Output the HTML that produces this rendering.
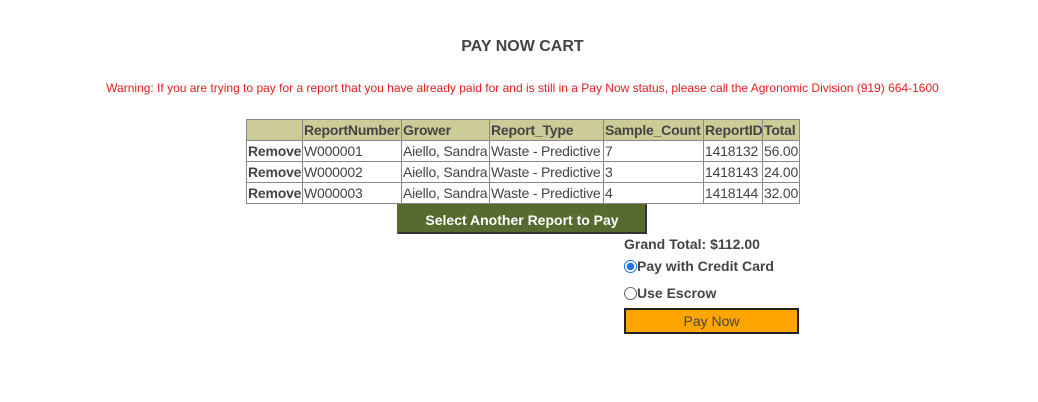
<!DOCTYPE html>
<html><head><style>
body{margin:0;width:1038px;height:402px;background:#fff;font-family:"Liberation Sans",Arial,sans-serif;color:#444;position:relative;overflow:hidden}
.a{position:absolute}
table{border-collapse:collapse;font-size:14px;color:#444;table-layout:fixed;width:553px;letter-spacing:-0.2px}
td,th{border:1px solid #888;padding:0 0 0 1px;height:20px;text-align:left;white-space:nowrap;overflow:hidden}
th{background:#cccc99;font-weight:bold}
</style></head><body>
<div class="a" style="left:0;width:1045px;top:38px;text-align:center;font-weight:bold;font-size:16px">PAY NOW CART</div>
<div class="a" style="left:0;width:1045px;top:81px;text-align:center;font-size:12px;color:#e0201e">Warning: If you are trying to pay for a report that you have already paid for and is still in a Pay Now status, please call the Agronomic Division (919) 664-1600</div>
<table class="a" style="left:246px;top:119px">
<colgroup><col style="width:56px"><col style="width:99px"><col style="width:88px"><col style="width:114px"><col style="width:100px"><col style="width:59px"><col style="width:37px"></colgroup>
<tr><th></th><th>ReportNumber</th><th>Grower</th><th>Report_Type</th><th>Sample_Count</th><th>ReportID</th><th>Total</th></tr>
<tr><td><b>Remove</b></td><td>W000001</td><td>Aiello, Sandra</td><td>Waste - Predictive</td><td>7</td><td>1418132</td><td>56.00</td></tr>
<tr><td><b>Remove</b></td><td>W000002</td><td>Aiello, Sandra</td><td>Waste - Predictive</td><td>3</td><td>1418143</td><td>24.00</td></tr>
<tr><td><b>Remove</b></td><td>W000003</td><td>Aiello, Sandra</td><td>Waste - Predictive</td><td>4</td><td>1418144</td><td>32.00</td></tr>
</table>
<div class="a" style="left:397px;top:204px;width:246px;height:26px;background:#556b2f;border:2px solid #333;border-top-color:#556b2f;border-left-color:#556b2f;color:#fff;font-weight:bold;font-size:14px;text-align:center;line-height:28px">Select Another Report to Pay</div>
<div class="a" style="left:624px;top:236px;font-weight:bold;font-size:14px">Grand Total: $112.00</div>
<div class="a" style="left:624px;top:258px;font-weight:bold;font-size:14px;display:flex;align-items:center"><span style="width:11px;height:11px;border-radius:50%;border:1px solid #1a73e8;background:radial-gradient(circle,#1a73e8 45%,#fff 50%);display:inline-block"></span>Pay with Credit Card</div>
<div class="a" style="left:624px;top:285px;font-weight:bold;font-size:14px;display:flex;align-items:center"><span style="width:11px;height:11px;border-radius:50%;border:1px solid #666;display:inline-block"></span>Use Escrow</div>
<div class="a" style="left:624px;top:308px;width:171px;height:22px;background:#ffa500;border:2px solid #222;text-align:center;font-size:14px;line-height:22px;color:#444">Pay Now</div>
</body></html>
